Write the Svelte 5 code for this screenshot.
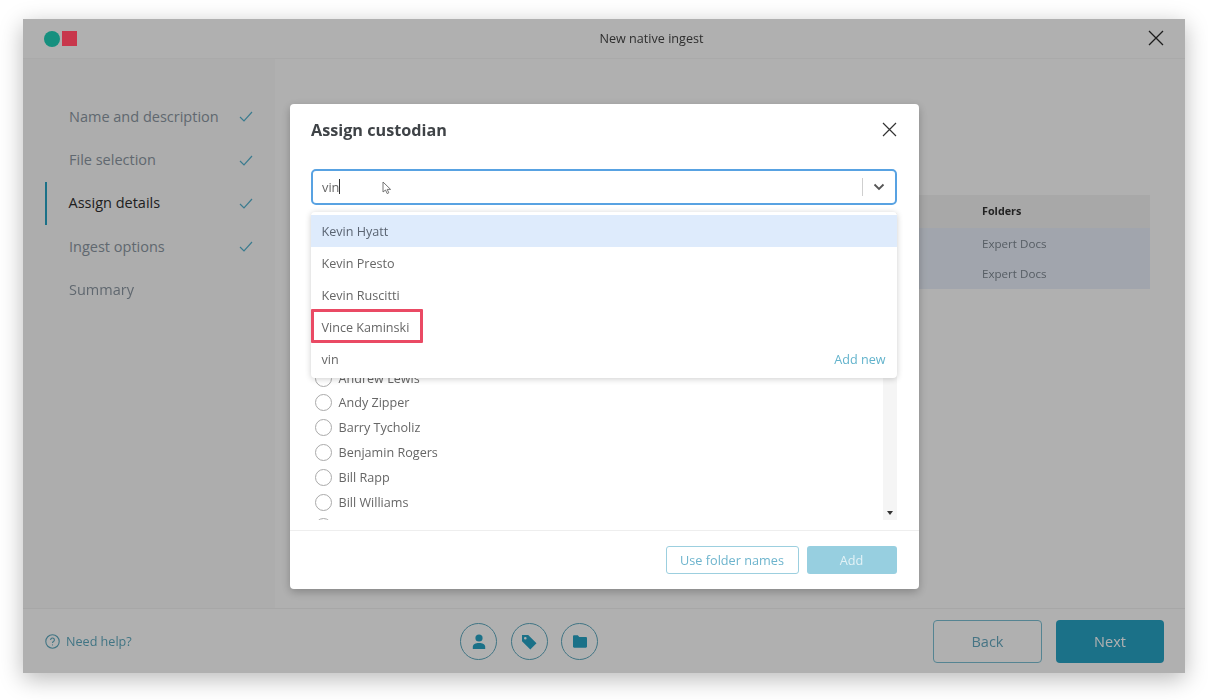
<script lang="ts">
  const steps = [
    { label: 'Name and description', done: true },
    { label: 'File selection', done: true },
    { label: 'Assign details', done: true, active: true },
    { label: 'Ingest options', done: true },
    { label: 'Summary', done: false }
  ]
  const matches = ['Kevin Hyatt', 'Kevin Presto', 'Kevin Ruscitti', 'Vince Kaminski']
  const custodians = [
    'Aaron Bell', 'Adam Keller', 'Alan Moore', 'Albert Meyers', 'Amy Fitzpatrick', 'Andrea Ring',
    'Andrew Lewis', 'Andy Zipper', 'Barry Tycholiz', 'Benjamin Rogers', 'Bill Rapp', 'Bill Williams', 'Bob Shults'
  ]
</script>

<div class="page">
  <div class="window">
    <header class="titlebar">
      <div class="logo"><span class="dot"></span><span class="square"></span></div>
      <div class="title">New native ingest</div>
      <svg class="close" width="16" height="16" viewBox="0 0 16 16"><path d="M1 1l14 14M15 1L1 15" /></svg>
    </header>

    <div class="body">
      <nav class="steps">
        {#each steps as step}
          <div class="step" class:active={step.active}>
            <span>{step.label}</span>
            {#if step.done}
              <svg width="14" height="11" viewBox="0 0 14 11"><path d="M1 6l4 4 8-9" /></svg>
            {/if}
          </div>
        {/each}
      </nav>
      <main class="content">
        <div class="table">
          <div class="cell head">Folders</div>
          <div class="cell sel">Expert Docs</div>
          <div class="cell sel">Expert Docs</div>
        </div>
      </main>
    </div>

    <footer class="footer">
      <div class="help">
        <svg width="15" height="15" viewBox="0 0 15 15">
          <circle cx="7.5" cy="7.5" r="6.7" />
          <path d="M5.6 5.9a1.9 1.9 0 1 1 2.9 1.6c-.7.4-1 .8-1 1.5" />
          <path d="M7.5 10.4v1" />
        </svg>
        <span>Need help?</span>
      </div>
      <div class="round-buttons">
        <div class="round">
          <svg width="14" height="15" viewBox="0 0 14 15"><circle cx="7" cy="4" r="3.6" /><path d="M.8 15v-2.2C.8 10.300 3.500 9 7 9s6.200 1.300 6.200 3.800V15z" /></svg>
        </div>
        <div class="round">
          <svg width="16" height="16" viewBox="0 0 16 16"><path fill-rule="evenodd" d="M1 1h6.200L15.500 9.300 9.300 15.500 1 7.200zM4.300 3a1.300 1.300 0 1 0 0 2.600 1.300 1.300 0 0 0 0-2.600z" /></svg>
        </div>
        <div class="round">
          <svg width="14" height="13" viewBox="0 0 14 13"><path d="M0 1.500C0 .7.500.2 1.200.2h3.600l1.500 1.900h6.500c.7 0 1.200.5 1.200 1.200v8.300c0 .7-.5 1.200-1.200 1.200H1.200C.5 12.800 0 12.300 0 11.600z" /></svg>
        </div>
      </div>
      <div class="nav-buttons">
        <div class="btn back">Back</div>
        <div class="btn next">Next</div>
      </div>
    </footer>

    <div class="overlay">
      <div class="modal">
        <div class="modal-head">
          <h2>Assign custodian</h2>
          <svg class="modal-close" width="15" height="15" viewBox="0 0 15 15"><path d="M1 1l13 13M14 1L1 14" /></svg>
        </div>

        <div class="modal-body">
          <div class="select">
            <span class="typed">vin</span><span class="caret"></span>
            <svg class="pointer" width="10" height="14" viewBox="0 0 10 14"><path d="M1 1v10l2.500-2 1.700 3.600 1.600-.8L5.200 8.400H8.600z" /></svg>
            <span class="divider"></span>
            <svg class="chevron" width="12" height="8" viewBox="0 0 12 8"><path d="M1.500 1.500L6 6l4.500-4.500" /></svg>
          </div>

          <div class="list-wrap">
            <div class="list">
              {#each custodians as name}
                <div class="radio-row"><span class="radio"></span>{name}</div>
              {/each}
            </div>
            <div class="scrollbar"><span class="arrow"></span></div>
          </div>

          <div class="dropdown">
            {#each matches as name, i}
              <div class="option" class:hover={i === 0}>
                {name}
                {#if name === 'Vince Kaminski'}<span class="mark"></span>{/if}
              </div>
            {/each}
            <div class="option">vin<span class="add-new">Add new</span></div>
          </div>
        </div>

        <div class="modal-foot">
          <div class="mbtn outline">Use folder names</div>
          <div class="mbtn add">Add</div>
        </div>
      </div>
    </div>
  </div>
</div>

<style>
  :global(body) {
    background: #fff;
  }
  .page {
    box-sizing: border-box;
    height: 700px;
    padding: 19px 23px 27px;
    overflow: hidden;
    filter: blur(0.35px);
  }
  .window {
    position: relative;
    box-sizing: border-box;
    width: 1162px;
    height: 654px;
    display: flex;
    flex-direction: column;
    background: #fff;
    color: #55606a;
    font-family: 'Open Sans', sans-serif;
    box-shadow: 0 6px 22px rgba(0, 0, 0, 0.28);
  }
  .titlebar {
    flex: 0 0 39px;
    display: flex;
    align-items: center;
    justify-content: center;
    position: relative;
    border-bottom: 1px solid #f6f6f6;
  }
  .logo {
    position: absolute;
    left: 21px;
    top: 12px;
    z-index: 1;
    display: flex;
    gap: 2px;
  }
  .dot {
    width: 16px;
    height: 16px;
    border-radius: 50%;
    background: #16907f;
  }
  .square {
    width: 15px;
    height: 15px;
    background: #c8374c;
  }
  .title {
    margin-left: 95px;
    margin-bottom: 1px;
    font-size: 12.6px;
    color: #444;
  }
  .close {
    position: absolute;
    right: 21px;
    top: 11px;
  }
  .close path {
    fill: none;
    stroke: #2a2a2a;
    stroke-width: 1.300;
  }
  .body {
    flex: 1;
    display: flex;
    min-height: 0;
  }
  .steps {
    width: 252px;
    box-sizing: border-box;
    padding: 36px 22px 0 22px;
    background: #fbfbfb;
    display: flex;
    flex-direction: column;
  }
  .step {
    height: 43.4px;
    display: flex;
    align-items: center;
    justify-content: space-between;
    padding: 0 0 0 24px;
    font-size: 14.5px;
    color: #8c97a2;
    box-sizing: border-box;
  }
  .step span {
    margin-bottom: 1px;
  }
  .step.active {
    color: #2f2f2f;
    border-left: 2.500px solid #28a4c6;
    padding-left: 21.500px;
  }
  .step svg path {
    fill: none;
    stroke: #56b3cf;
    stroke-width: 1.200;
  }
  .content {
    flex: 1;
    padding: 136px 35px 0 20px;
  }
  .table {
    display: flex;
    flex-direction: column;
    font-size: 11.6px;
  }
  .cell {
    height: 30.500px;
    box-sizing: border-box;
    display: flex;
    align-items: center;
    padding-left: 687px;
    color: #7d8791;
  }
  .cell.head {
    height: 33px;
    padding-bottom: 2px;
    background: #f4f4f4;
    font-weight: 700;
    font-size: 10.800px;
    color: #333;
  }
  .cell.sel {
    background: #eaf0fb;
  }
  .footer {
    flex: 0 0 65px;
    box-sizing: border-box;
    border-top: 1px solid #f2f2f2;
    display: flex;
    align-items: center;
    justify-content: space-between;
    padding: 0 21px 0 22px;
    position: relative;
  }
  .help {
    display: flex;
    align-items: center;
    gap: 6px;
    font-size: 12.6px;
    color: #5ea9bf;
  }
  .help svg {
    fill: none;
    stroke: #5ea9bf;
    stroke-width: 1.100;
  }
  .round-buttons {
    position: absolute;
    left: 437px;
    top: 14px;
    display: flex;
    gap: 13.500px;
  }
  .round {
    width: 37px;
    height: 37px;
    box-sizing: border-box;
    border: 1px solid #5ea9bf;
    border-radius: 50%;
    display: grid;
    place-items: center;
  }
  .round svg {
    fill: #28a4c6;
  }
  .nav-buttons {
    display: flex;
    gap: 14px;
  }
  .btn {
    width: 108px;
    height: 43px;
    box-sizing: border-box;
    border-radius: 4px;
    display: grid;
    place-items: center;
    font-size: 14.5px;
  }
  .back {
    border: 1px solid #7cc0d4;
    color: #66a9c0;
    width: 109px;
  }
  .next {
    background: #28a4c6;
    color: #ffffff;
  }
  .overlay {
    position: absolute;
    inset: 0;
    background: rgba(0, 0, 0, 0.31);
    display: grid;
    place-items: center;
  }
  .modal {
    width: 629px;
    height: 485px;
    background: #fff;
    border-radius: 4px;
    box-shadow: 0 3px 10px rgba(0, 0, 0, 0.25);
    display: flex;
    flex-direction: column;
  }
  .modal-head {
    flex: 0 0 65px;
    box-sizing: border-box;
    display: flex;
    align-items: center;
    justify-content: space-between;
    padding: 0 22px 14px 21.500px;
  }
  h2 {
    margin: 2px 0 0;
    font-size: 16.200px;
    font-weight: 700;
    color: #3f4347;
  }
  .modal-close path {
    fill: none;
    stroke: #333;
    stroke-width: 1.200;
  }
  .modal-body {
    flex: 1;
    position: relative;
    padding: 0 22px 0 21px;
    min-height: 0;
    display: flex;
    flex-direction: column;
  }
  .select {
    flex: 0 0 36px;
    box-sizing: border-box;
    border: 2px solid #58a2e2;
    border-radius: 5px;
    display: flex;
    align-items: center;
    padding: 0 9.500px;
    font-size: 12.8px;
    color: #666;
    position: relative;
  }
  .caret {
    width: 1px;
    height: 15px;
    background: #333;
  }
  .pointer {
    position: absolute;
    left: 69px;
    top: 10px;
  }
  .pointer path {
    fill: #fff;
    stroke: #666;
    stroke-width: 0.900;
  }
  .divider {
    width: 1px;
    height: 18px;
    background: #cfcfcf;
    margin-left: auto;
    margin-right: 10px;
  }
  .chevron path {
    fill: none;
    stroke: #555;
    stroke-width: 1.800;
  }
  .list-wrap {
    margin-top: 8px;
    height: 307px;
    display: flex;
    overflow: hidden;
  }
  .list {
    flex: 1;
    padding-top: 4.500px;
  }
  .radio-row {
    height: 24.800px;
    display: flex;
    align-items: center;
    gap: 7px;
    padding-left: 4px;
    font-size: 12.6px;
    color: #666;
  }
  .radio {
    width: 15px;
    height: 15px;
    border: 1px solid #aaa;
    border-radius: 50%;
  }
  .scrollbar {
    width: 13.500px;
    background: #f5f5f5;
    position: relative;
  }
  .arrow {
    position: absolute;
    left: 4px;
    bottom: 5px;
    border-left: 3px solid transparent;
    border-right: 3px solid transparent;
    border-top: 4px solid #333;
  }
  .dropdown {
    position: absolute;
    left: 21px;
    right: 22px;
    top: 43px;
    height: 166px;
    box-sizing: border-box;
    padding-top: 3px;
    background: #fff;
    border-radius: 4px;
    box-shadow: 0 1px 6px rgba(0, 0, 0, 0.2);
  }
  .option {
    height: 32px;
    box-sizing: border-box;
    padding: 1px 11px 0;
    display: flex;
    align-items: center;
    justify-content: space-between;
    font-size: 12.6px;
    color: #666;
    position: relative;
  }
  .option.hover {
    background: #deebfc;
    color: #5a6472;
  }
  .mark {
    position: absolute;
    left: 0;
    top: -2px;
    width: 106px;
    height: 28px;
    border: 3px solid #ea4a64;
    border-radius: 1px;
  }
  .add-new {
    color: #62b3cc;
  }
  .modal-foot {
    flex: 0 0 59px;
    box-sizing: border-box;
    border-top: 1px solid #eee;
    display: flex;
    justify-content: flex-end;
    align-items: center;
    gap: 8px;
    padding: 1px 22px 0 0;
  }
  .mbtn {
    height: 28px;
    box-sizing: border-box;
    border-radius: 3px;
    display: grid;
    place-items: center;
    font-size: 12.7px;
  }
  .outline {
    width: 133px;
    border: 1px solid #9ccfdf;
    color: #6db4cd;
  }
  .add {
    width: 90px;
    background: #97cfe0;
    color: #e3f2f6;
  }
</style>
